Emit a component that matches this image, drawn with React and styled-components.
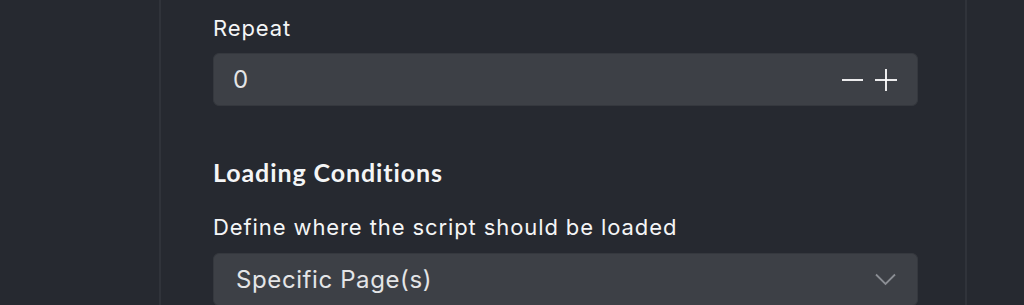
import React, { useState } from 'react'
import styled, { createGlobalStyle } from 'styled-components'

const GlobalStyle = createGlobalStyle`
  html, body {
    margin: 0;
    padding: 0;
    background: #262930;
  }
  * { box-sizing: border-box; }
`

const Page = styled.div`
  display: flex;
  height: 305px;
  overflow: hidden;
  background: #262930;
  font-family: Inter, "Liberation Sans", sans-serif;
  color: #f4f5f6;
`

const Panel = styled.div`
  margin-left: 159px;
  width: 808px;
  border-left: 2px solid #30333a;
  border-right: 2px solid #30333a;
  padding: 15px 47px 0 52px;
  display: flex;
  flex-direction: column;
`

const Label = styled.div`
  font-size: 22px;
  line-height: 26px;
  letter-spacing: 0.9px;
  margin-bottom: ${p => p.gap || 12}px;
`

const Heading = styled.h3`
  margin: 51px 0 27px;
  font-family: Lato, "Liberation Sans", sans-serif;
  font-weight: 700;
  font-size: 25px;
  line-height: 30px;
  letter-spacing: 0.9px;
  font-variant-ligatures: none;
`

const Field = styled.div`
  display: flex;
  align-items: center;
  height: 53px;
  flex-shrink: 0;
  background: #3d4046;
  border: 1px solid #35383e;
  border-radius: 6px;
  padding: 0 ${p => p.trail || 20}px 0 ${p => p.inset || 19}px;
`

const Value = styled.span`
  flex: 1;
  font-size: 24px;
  letter-spacing: 0.6px;
  color: #e4e5e7;
`

const Stepper = styled.div`
  display: flex;
  align-items: center;
  gap: 12px;
`

const StepButton = styled.button`
  display: flex;
  padding: 0;
  border: 0;
  background: none;
  color: #ffffff;
  cursor: pointer;
`

const Chevron = styled.svg`
  color: #8b8e94;
`

const App = () => {
  const [repeat, setRepeat] = useState(0)

  return (
    <Page>
      <GlobalStyle />
      <Panel>
        <Label>Repeat</Label>
        <Field trail={20}>
          <Value>{repeat}</Value>
          <Stepper>
            <StepButton onClick={() => setRepeat(Math.max(0, repeat - 1))}>
              <svg width="21" height="22" viewBox="0 0 21 22">
                <line x1="0" y1="11" x2="21" y2="11" stroke="currentColor" strokeWidth="1.8" />
              </svg>
            </StepButton>
            <StepButton onClick={() => setRepeat(repeat + 1)}>
              <svg width="22" height="22" viewBox="0 0 22 22">
                <line x1="0" y1="11" x2="22" y2="11" stroke="currentColor" strokeWidth="1.8" />
                <line x1="11" y1="0" x2="11" y2="22" stroke="currentColor" strokeWidth="1.8" />
              </svg>
            </StepButton>
          </Stepper>
        </Field>

        <Heading>Loading Conditions</Heading>
        <Label gap={13}>Define where the script should be loaded</Label>
        <Field inset={22} trail={21}>
          <Value>Specific Page(s)</Value>
          <Chevron width="21" height="13" viewBox="0 0 21 13">
            <polyline points="1,1.5 10.5,11 20,1.5" fill="none" stroke="currentColor" strokeWidth="1.8" />
          </Chevron>
        </Field>
      </Panel>
    </Page>
  )
}

export default App
